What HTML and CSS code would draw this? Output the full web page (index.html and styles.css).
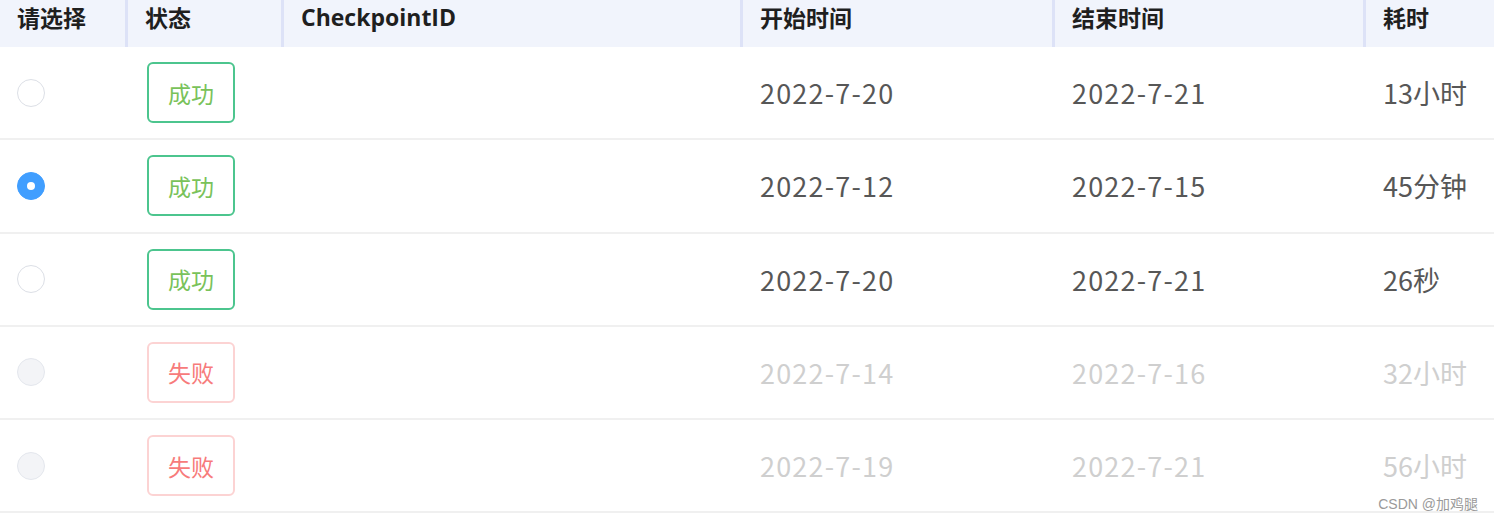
FILE: index.html
```html
<!DOCTYPE html>
<html lang="zh">
<head>
<meta charset="utf-8">
<link rel="stylesheet" href="styles.css">
</head>
<body>
<div class="table">
  <div class="row head">
    <div class="cell c1">请选择</div>
    <div class="cell c2">状态</div>
    <div class="cell c3 latin">CheckpointID</div>
    <div class="cell c4">开始时间</div>
    <div class="cell c5">结束时间</div>
    <div class="cell c6">耗时</div>
  </div>
  <div class="row">
    <div class="cell c1"><span class="radio"></span></div>
    <div class="cell c2"><span class="tag ok">成功</span></div>
    <div class="cell c3"></div>
    <div class="cell c4 date">2022-7-20</div>
    <div class="cell c5 date">2022-7-21</div>
    <div class="cell c6">13小时</div>
  </div>
  <div class="row">
    <div class="cell c1"><span class="radio checked"></span></div>
    <div class="cell c2"><span class="tag ok">成功</span></div>
    <div class="cell c3"></div>
    <div class="cell c4 date">2022-7-12</div>
    <div class="cell c5 date">2022-7-15</div>
    <div class="cell c6">45分钟</div>
  </div>
  <div class="row">
    <div class="cell c1"><span class="radio"></span></div>
    <div class="cell c2"><span class="tag ok">成功</span></div>
    <div class="cell c3"></div>
    <div class="cell c4 date">2022-7-20</div>
    <div class="cell c5 date">2022-7-21</div>
    <div class="cell c6">26秒</div>
  </div>
  <div class="row disabled">
    <div class="cell c1"><span class="radio"></span></div>
    <div class="cell c2"><span class="tag fail">失败</span></div>
    <div class="cell c3"></div>
    <div class="cell c4 date">2022-7-14</div>
    <div class="cell c5 date">2022-7-16</div>
    <div class="cell c6">32小时</div>
  </div>
  <div class="row disabled">
    <div class="cell c1"><span class="radio"></span></div>
    <div class="cell c2"><span class="tag fail">失败</span></div>
    <div class="cell c3"></div>
    <div class="cell c4 date">2022-7-19</div>
    <div class="cell c5 date">2022-7-21</div>
    <div class="cell c6">56小时</div>
  </div>
</div>
<div class="watermark">CSDN @加鸡腿</div>
</body>
</html>
```
FILE: styles.css
```css
html, body {
  margin: 0;
  padding: 0;
  background: #ffffff;
}
body {
  font-family: "Noto Sans CJK SC", "Noto Sans", sans-serif;
  color: #575757;
  position: relative;
  width: 1494px;
  height: 522px;
  overflow: hidden;
}
.table {
  display: flex;
  flex-direction: column;
}
.row {
  display: grid;
  grid-template-columns: 125px 156px 459px 312px 311px 1fr;
  height: 93.25px;
  box-sizing: border-box;
  border-bottom: 2px solid #f0f0f0;
  align-items: center;
}
.row.head {
  height: 47px;
  background: #f1f4fc;
  border-bottom: none;
  align-items: stretch;
}
.head .cell {
  font-weight: 700;
  font-size: 23px;
  color: #1f1f1f;
  padding-top: 2px;
  line-height: 30px;
  box-sizing: border-box;
}
.head .cell + .cell {
  border-left: 3px solid #dde2f7;
}
.cell {
  padding-left: 20px;
  font-size: 27px;
  white-space: nowrap;
}
.date { letter-spacing: 1.2px; }
.c1 { padding-left: 17px; }
.head .c2 { padding-left: 17px; }
.c2 { padding-left: 22px; }
.head .c3 { padding-left: 17px; }
.head .c4 { padding-left: 17px; }
.head .c5 { padding-left: 17px; }
.head .c6 { padding-left: 17px; }
.latin { font-family: "Open Sans", "Noto Sans", sans-serif; }
.radio {
  display: block;
  width: 26px;
  height: 26px;
  border: 1px solid #dcdfe6;
  border-radius: 50%;
  background: #ffffff;
  position: relative;
}
.radio.checked {
  background: #409eff;
  border-color: #409eff;
}
.radio.checked::after {
  content: "";
  position: absolute;
  left: 50%;
  top: 50%;
  width: 8px;
  height: 8px;
  margin: -4px 0 0 -4px;
  border-radius: 50%;
  background: #ffffff;
}
.disabled .radio {
  background: #f3f4f7;
  border-color: #e4e7ed;
}
.tag {
  display: flex;
  align-items: center;
  justify-content: center;
  width: 88px;
  height: 61px;
  box-sizing: border-box;
  border-radius: 6px;
  font-size: 23px;
}
.tag.ok {
  border: 2px solid #4cc58e;
  color: #79c25a;
}
.tag.fail {
  border: 2px solid #fcd3d3;
  color: #f77b7b;
}
.disabled .cell {
  color: #cfcfcf;
}
.watermark {
  position: absolute;
  right: 16px;
  bottom: 9px;
  font-size: 14px;
  color: #9a9a9a;
  font-family: "Liberation Sans", "Noto Sans CJK SC", sans-serif;
}
```
